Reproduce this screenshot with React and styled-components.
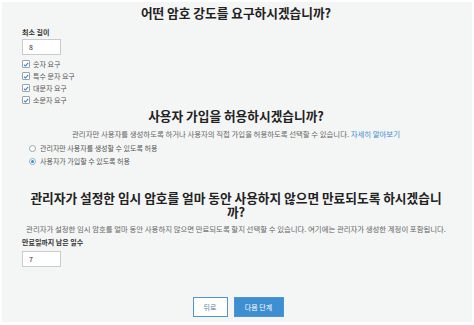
import React from "react";
import styled, { createGlobalStyle } from "styled-components";

const Global = createGlobalStyle`
  html, body { margin: 0; padding: 0; background: #ffffff; }
  body { font-family: "Noto Sans CJK KR", "Noto Sans", sans-serif; }
  * { box-sizing: border-box; }
`;

const Panel = styled.div`
  margin: 2px 2px 0 2px;
  height: 320px;
  background: #f4f5f5;
  padding: 4px 22px 0 20px;
  display: flex;
  flex-direction: column;
`;

const Heading = styled.h2`
  margin: ${(p) => p.$mt || 0}px 0 0 0;
  font-size: 12.7px;
  line-height: 14px;
  font-weight: 700;
  color: #222;
  text-align: center;
  letter-spacing: 0;
`;

const DescWrap = styled.div`
  margin: ${(p) => p.$mt || 0}px -20px 0 -20px;
  display: flex;
  justify-content: center;
`;

const Desc = styled.p`
  margin: 0;
  font-size: 7.4px;
  line-height: 10px;
  color: #666;
  white-space: nowrap;
`;

const Link = styled.a`
  color: #3a8ccc;
  text-decoration: none;
`;

const Label = styled.div`
  margin-top: ${(p) => p.$mt || 0}px;
  font-size: 7px;
  line-height: 10px;
  font-weight: 700;
  color: #333;
`;

const Input = styled.div`
  margin-top: ${(p) => p.$mt || 3}px;
  width: 39px;
  height: 16px;
  background: #fff;
  border: 1px solid #c9cbcd;
  font-size: 7px;
  line-height: 14px;
  padding-left: 6px;
  color: #333;
`;

const CheckList = styled.div`
  margin-top: 5px;
  display: flex;
  flex-direction: column;
  gap: 4px;
`;

const CheckRow = styled.div`
  display: flex;
  align-items: center;
  gap: 3px;
  height: 8px;
  font-size: 7px;
  color: #555;
`;

const Box = styled.span`
  width: 8px;
  height: 8px;
  border: 1px solid #9aa3ab;
  background: #fff;
  border-radius: 1px;
  display: flex;
  align-items: center;
  justify-content: center;
`;

const RadioList = styled.div`
  margin-top: 5px;
  padding-left: 7px;
  display: flex;
  flex-direction: column;
  gap: 5px;
`;

const RadioRow = styled.div`
  display: flex;
  align-items: center;
  gap: 4px;
  height: 8px;
  font-size: 7px;
  color: #555;
`;

const Radio = styled.span`
  width: 7px;
  height: 7px;
  border-radius: 50%;
  border: 1px solid ${(p) => (p.$on ? "#7fb3dc" : "#9aa3ab")};
  background: #fff;
  display: flex;
  align-items: center;
  justify-content: center;
  &::after {
    content: "";
    width: 3px;
    height: 3px;
    border-radius: 50%;
    background: ${(p) => (p.$on ? "#3a8ccc" : "transparent")};
  }
`;

const Buttons = styled.div`
  margin-top: 30px;
  display: flex;
  justify-content: center;
  gap: 6px;
  padding-left: 4px;
`;

const Button = styled.button`
  height: 20px;
  width: ${(p) => p.$w}px;
  font-family: inherit;
  font-size: 7px;
  padding: 0;
  border: 1px solid #4d96d2;
  background: ${(p) => (p.$primary ? "#3d8fd1" : "#fff")};
  color: ${(p) => (p.$primary ? "#fff" : "#5a7d99")};
  cursor: pointer;
`;

const Check = () => (
  <svg width="7" height="7" viewBox="0 0 10 10">
    <path d="M1.5 5.2 L4 7.6 L8.6 2.2" fill="none" stroke="#2f7fc1" strokeWidth="1.8" />
  </svg>
);

export default function App() {
  const checks = ["숫자 요구", "특수 문자 요구", "대문자 요구", "소문자 요구"];
  return (
    <>
      <Global />
      <Panel>
        <Heading>어떤 암호 강도를 요구하시겠습니까?</Heading>
        <Label $mt={7}>최소 길이</Label>
        <Input $mt={2}>8</Input>
        <CheckList>
          {checks.map((c) => (
            <CheckRow key={c}>
              <Box>
                <Check />
              </Box>
              {c}
            </CheckRow>
          ))}
        </CheckList>
        <Heading $mt={5}>사용자 가입을 허용하시겠습니까?</Heading>
        <DescWrap $mt={6}>
          <Desc>
            관리자만 사용자를 생성하도록 하거나 사용자의 직접 가입을 허용하도록 선택할 수 있습니다.{" "}
            <Link>자세히 알아보기</Link>
          </Desc>
        </DescWrap>
        <RadioList>
          <RadioRow>
            <Radio />
            관리자만 사용자를 생성할 수 있도록 허용
          </RadioRow>
          <RadioRow>
            <Radio $on />
            사용자가 가입할 수 있도록 허용
          </RadioRow>
        </RadioList>
        <Heading $mt={26}>
          관리자가 설정한 임시 암호를 얼마 동안 사용하지 않으면 만료되도록 하시겠습니까?
        </Heading>
        <DescWrap $mt={5}>
          <Desc>
            관리자가 설정한 임시 암호를 얼마 동안 사용하지 않으면 만료되도록 할지 선택할 수 있습니다. 여기에는 관리자가 생성한 계정이 포함됩니다.
          </Desc>
        </DescWrap>
        <Label $mt={3}>만료일까지 남은 일수</Label>
        <Input $mt={4}>7</Input>
        <Buttons>
          <Button $w={35}>뒤로</Button>
          <Button $w={50} $primary>
            다음 단계
          </Button>
        </Buttons>
      </Panel>
    </>
  );
}
